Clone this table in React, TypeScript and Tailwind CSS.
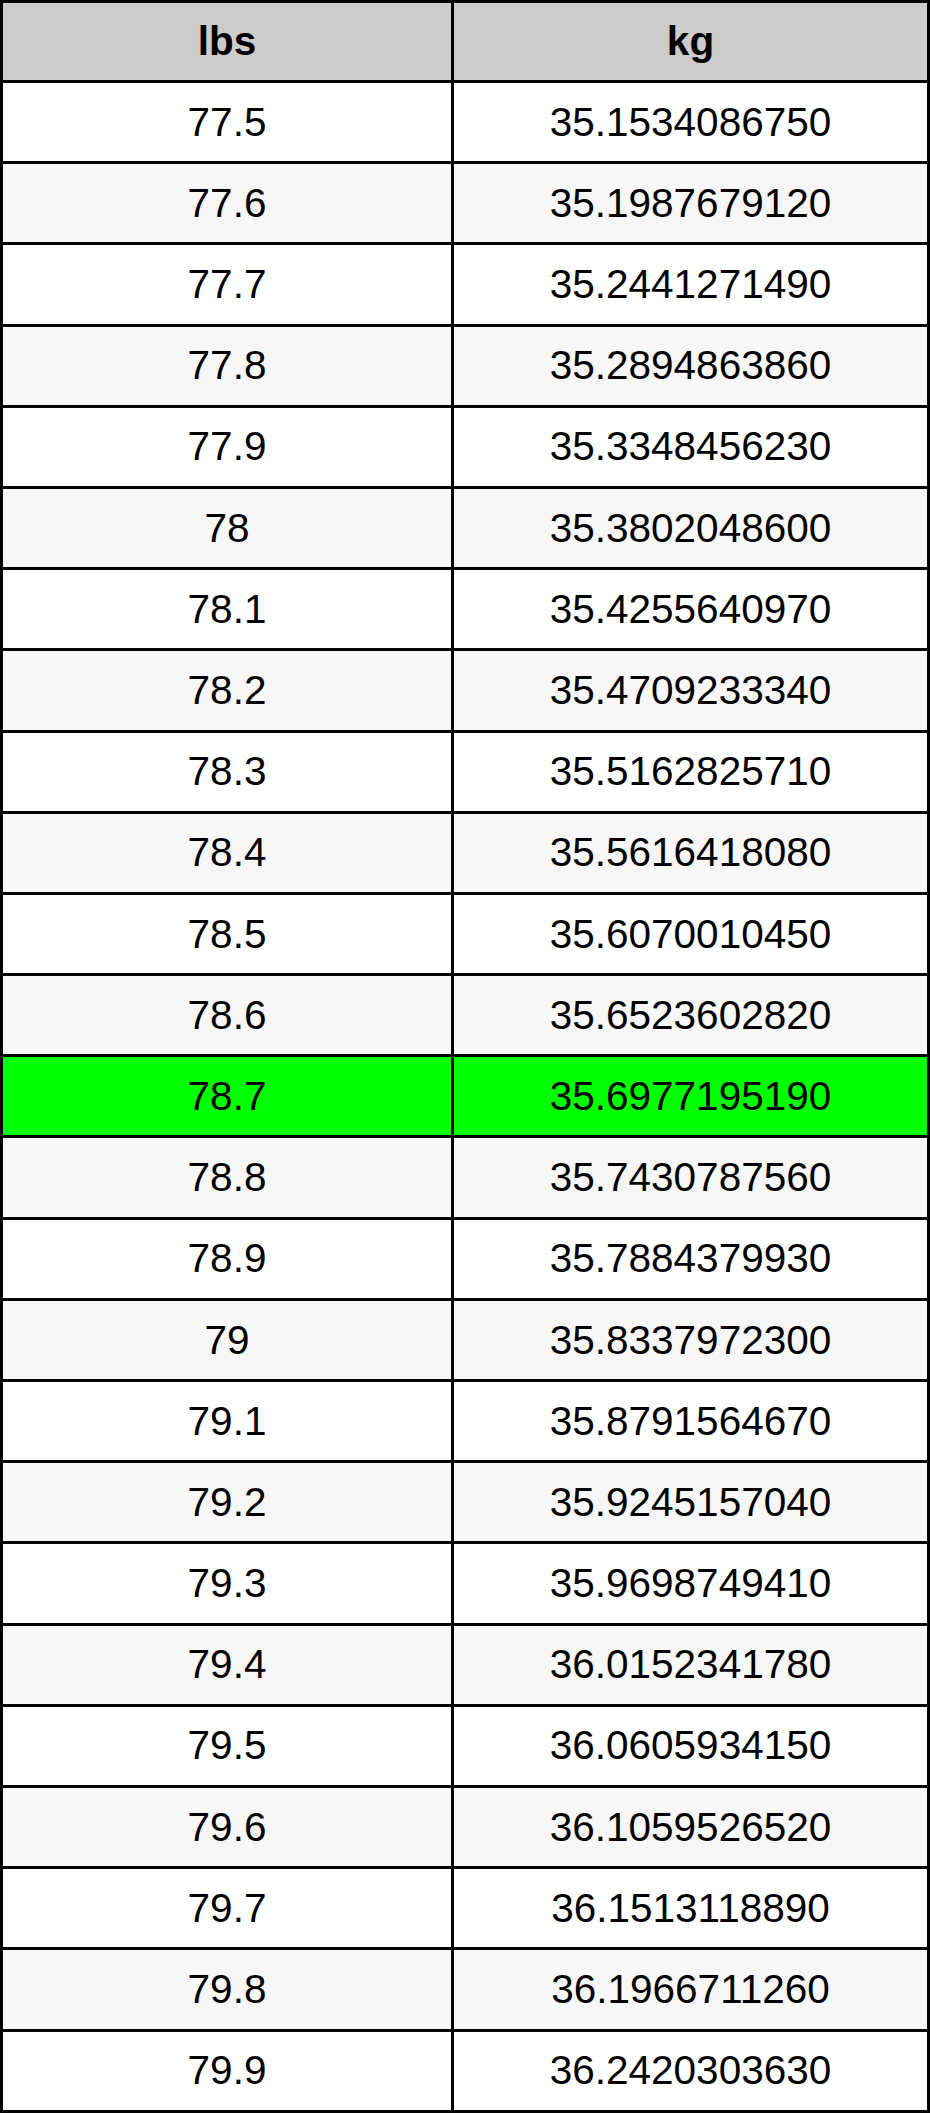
const rows: [string, string][] = [
  ["77.5", "35.1534086750"],
  ["77.6", "35.1987679120"],
  ["77.7", "35.2441271490"],
  ["77.8", "35.2894863860"],
  ["77.9", "35.3348456230"],
  ["78", "35.3802048600"],
  ["78.1", "35.4255640970"],
  ["78.2", "35.4709233340"],
  ["78.3", "35.5162825710"],
  ["78.4", "35.5616418080"],
  ["78.5", "35.6070010450"],
  ["78.6", "35.6523602820"],
  ["78.7", "35.6977195190"],
  ["78.8", "35.7430787560"],
  ["78.9", "35.7884379930"],
  ["79", "35.8337972300"],
  ["79.1", "35.8791564670"],
  ["79.2", "35.9245157040"],
  ["79.3", "35.9698749410"],
  ["79.4", "36.0152341780"],
  ["79.5", "36.0605934150"],
  ["79.6", "36.1059526520"],
  ["79.7", "36.1513118890"],
  ["79.8", "36.1966711260"],
  ["79.9", "36.2420303630"],
];

const HIGHLIGHT = "78.7";

const App = () => {
  return (
    <div className="w-[930px] bg-white font-['Liberation_Sans',Arial,sans-serif] text-[40.5px] text-black">
      <div className="flex flex-col border-x-[3px] border-t-[3px] border-black">
        <div className="flex h-[80px] border-b-[3px] border-black bg-[#cccccc] font-bold">
          <div className="flex w-[448px] items-center justify-center border-r-[3px] border-black box-content">
            lbs
          </div>
          <div className="flex flex-1 items-center justify-center">kg</div>
        </div>
        {rows.map(([lbs, kg], i) => {
          const bg =
            lbs === HIGHLIGHT ? "bg-[#00ff00]" : i % 2 === 1 ? "bg-[#f7f7f7]" : "bg-white";
          return (
            <div key={lbs} className={`flex h-[81.2px] border-b-[3px] border-black ${bg}`}>
              <div className="flex w-[448px] items-center justify-center border-r-[3px] border-black box-content">
                {lbs}
              </div>
              <div className="flex flex-1 items-center justify-center">{kg}</div>
            </div>
          );
        })}
      </div>
    </div>
  );
};

export default App;
